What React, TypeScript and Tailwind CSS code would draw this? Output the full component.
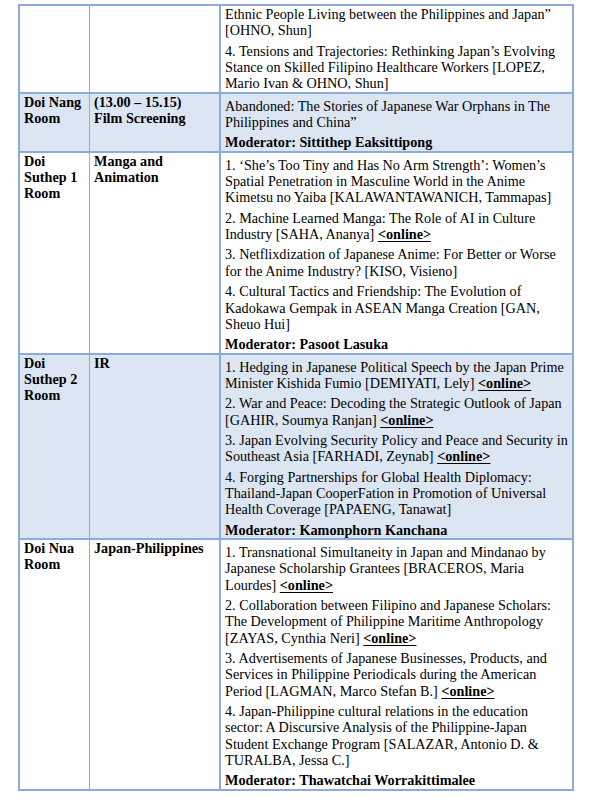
import React from "react";

type Row = {
  room: React.ReactNode;
  topic: React.ReactNode;
  items: React.ReactNode[];
  moderator?: string;
  shaded?: boolean;
  firstNoMargin?: boolean;
};

const Online = () => (
  <span className="font-bold underline decoration-1 underline-offset-[2px]">&lt;online&gt;</span>
);

const rows: Row[] = [
  {
    room: "",
    topic: "",
    firstNoMargin: true,
    items: [
      <>Ethnic People Living between the Philippines and Japan” [OHNO, Shun]</>,
      <>4. Tensions and Trajectories: Rethinking Japan’s Evolving Stance on Skilled Filipino Healthcare Workers [LOPEZ, Mario Ivan &amp; OHNO, Shun]</>,
    ],
  },
  {
    room: "Doi Nang Room",
    topic: (
      <>
        (13.00 – 15.15)
        <br />
        Film Screening
      </>
    ),
    shaded: true,
    items: [<>Abandoned: The Stories of Japanese War Orphans in The Philippines and China”</>],
    moderator: "Moderator: Sittithep Eaksittipong",
  },
  {
    room: "Doi Suthep 1 Room",
    topic: "Manga and Animation",
    items: [
      <>1. ‘She’s Too Tiny and Has No Arm Strength’: Women’s Spatial Penetration in Masculine World in the Anime Kimetsu no Yaiba [KALAWANTAWANICH, Tammapas]</>,
      <>
        2. Machine Learned Manga: The Role of AI in Culture Industry [SAHA, Ananya] <Online />
      </>,
      <>3. Netflixdization of Japanese Anime: For Better or Worse for the Anime Industry? [KISO, Visieno]</>,
      <>4. Cultural Tactics and Friendship: The Evolution of Kadokawa Gempak in ASEAN Manga Creation [GAN, Sheuo Hui]</>,
    ],
    moderator: "Moderator: Pasoot Lasuka",
  },
  {
    room: "Doi Suthep 2 Room",
    topic: "IR",
    shaded: true,
    items: [
      <>
        1. Hedging in Japanese Political Speech by the Japan Prime Minister Kishida Fumio [DEMIYATI, Lely] <Online />
      </>,
      <>
        2. War and Peace: Decoding the Strategic Outlook of Japan [GAHIR, Soumya Ranjan] <Online />
      </>,
      <>
        3. Japan Evolving Security Policy and Peace and Security in Southeast Asia [FARHADI, Zeynab] <Online />
      </>,
      <>4. Forging Partnerships for Global Health Diplomacy: Thailand-Japan CooperFation in Promotion of Universal Health Coverage [PAPAENG, Tanawat]</>,
    ],
    moderator: "Moderator: Kamonphorn Kanchana",
  },
  {
    room: "Doi Nua Room",
    topic: "Japan-Philippines",
    items: [
      <>
        1. Transnational Simultaneity in Japan and Mindanao by Japanese Scholarship Grantees [BRACEROS, Maria Lourdes] <Online />
      </>,
      <>
        2. Collaboration between Filipino and Japanese Scholars: The Development of Philippine Maritime Anthropology [ZAYAS, Cynthia Neri] <Online />
      </>,
      <>
        3. Advertisements of Japanese Businesses, Products, and Services in Philippine Periodicals during the American Period [LAGMAN, Marco Stefan B.] <Online />
      </>,
      <>
        4. Japan-Philippine cultural relations in the education
        <br />
        sector: A Discursive Analysis of the Philippine-Japan Student Exchange Program [SALAZAR, Antonio D. &amp; TURALBA, Jessa C.]
      </>,
    ],
    moderator: "Moderator: Thawatchai Worrakittimalee",
  },
];

export default function App() {
  return (
    <div className="min-h-[810px] w-[595px] bg-white pl-[18px] pt-[4px] font-['Liberation_Serif',serif] text-[14.2px] leading-[16.35px] text-black">
      <div className="w-[556px] border-l-2 border-t-2 border-[#8eaadb]">
        {rows.map((r, i) => (
          <div
            key={i}
            className={`flex border-b-2 border-[#8eaadb] ${r.shaded ? "bg-[#dce6f2]" : "bg-white"}`}
          >
            <div className="w-[70px] shrink-0 border-r border-[#8eaadb] px-[4px] font-bold">{r.room}</div>
            <div className="w-[131px] shrink-0 border-r-2 border-[#8eaadb] px-[4px] font-bold">{r.topic}</div>
            <div className="w-[353px] shrink-0 border-r-2 border-[#8eaadb] pl-[4px] pr-[2px]">
              {r.items.map((it, j) => (
                <p key={j} className={j === 0 && r.firstNoMargin ? "" : "mt-[4px]"}>
                  {it}
                </p>
              ))}
              {r.moderator && <p className="mt-[4px] font-bold">{r.moderator}</p>}
            </div>
          </div>
        ))}
      </div>
    </div>
  );
}
